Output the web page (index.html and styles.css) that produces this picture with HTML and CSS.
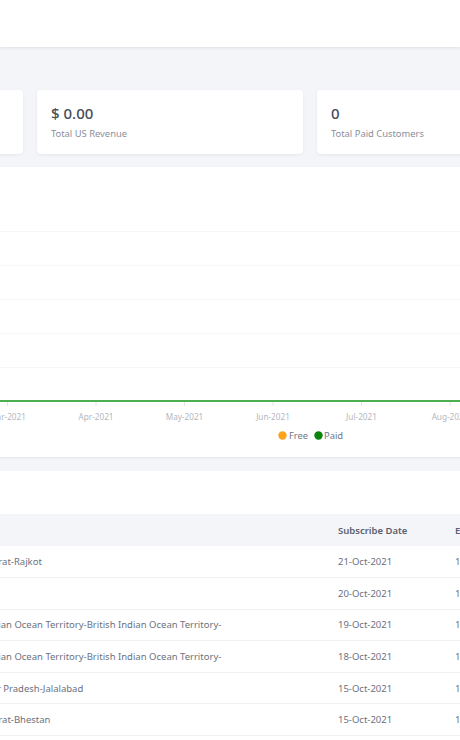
FILE: index.html
```html
<!DOCTYPE html>
<html>
<head>
<meta charset="utf-8">
<link rel="stylesheet" href="styles.css">
</head>
<body>
<header class="topbar"></header>
<main class="main">
  <section class="stats">
    <div class="stat-card">
      <div class="stat-value">12</div>
      <div class="stat-label">Total Customers</div>
    </div>
    <div class="stat-card">
      <div class="stat-value">$ 0.00</div>
      <div class="stat-label">Total US Revenue</div>
    </div>
    <div class="stat-card">
      <div class="stat-value">0</div>
      <div class="stat-label">Total Paid Customers</div>
    </div>
  </section>

  <section class="chart-card">
    <svg class="chart" width="1000" height="290" viewBox="0 0 1000 290">
      <g transform="translate(257,-167)">
        <g class="grid">
          <line x1="-257" y1="231.5" x2="743" y2="231.5"/>
          <line x1="-257" y1="265.5" x2="743" y2="265.5"/>
          <line x1="-257" y1="299.5" x2="743" y2="299.5"/>
          <line x1="-257" y1="333.5" x2="743" y2="333.5"/>
          <line x1="-257" y1="367.5" x2="743" y2="367.5"/>
        </g>
        <g class="ticks">
          <line x1="7.5" y1="402" x2="7.5" y2="406"/>
          <line x1="96" y1="402" x2="96" y2="406"/>
          <line x1="184.5" y1="402" x2="184.5" y2="406"/>
          <line x1="273" y1="402" x2="273" y2="406"/>
          <line x1="361.5" y1="402" x2="361.5" y2="406"/>
          <line x1="450" y1="402" x2="450" y2="406"/>
        </g>
        <line class="paid-line" x1="-257" y1="401" x2="743" y2="401"/>
        <g class="axis-labels">
          <text x="7.5" y="420">Mar-2021</text>
          <text x="96" y="420">Apr-2021</text>
          <text x="184.5" y="420">May-2021</text>
          <text x="273" y="420">Jun-2021</text>
          <text x="361.5" y="420">Jul-2021</text>
          <text x="450" y="420">Aug-2021</text>
        </g>
        <circle cx="282.5" cy="435.5" r="4.2" fill="#fba31a"/>
        <text class="legend" x="289" y="439">Free</text>
        <circle cx="318.5" cy="435.5" r="4.2" fill="#0b840b"/>
        <text class="legend" x="324" y="439">Paid</text>
      </g>
    </svg>
  </section>

  <section class="table-card">
    <div class="table-title">Recent Subscribers</div>
    <table class="subs">
      <colgroup>
        <col class="c-name"><col class="c-addr"><col class="c-date"><col class="c-exp">
      </colgroup>
      <thead>
        <tr><th>Name</th><th>Address</th><th>Subscribe Date</th><th>Expiry Date</th></tr>
      </thead>
      <tbody>
        <tr><td>Rahul Patel</td><td>India-Gujarat-Rajkot</td><td>21-Oct-2021</td><td>19-Nov-2021</td></tr>
        <tr><td>John Smith</td><td></td><td>20-Oct-2021</td><td>18-Nov-2021</td></tr>
        <tr><td>Test User</td><td>British Indian Ocean Territory-British Indian Ocean Territory-</td><td>19-Oct-2021</td><td>17-Nov-2021</td></tr>
        <tr><td>Demo User</td><td>British Indian Ocean Territory-British Indian Ocean Territory-</td><td>18-Oct-2021</td><td>16-Nov-2021</td></tr>
        <tr><td>Amit Kumar</td><td>India-Uttar Pradesh-Jalalabad</td><td>15-Oct-2021</td><td>13-Nov-2021</td></tr>
        <tr><td>Ravi Shah</td><td>India-Gujarat-Bhestan</td><td>15-Oct-2021</td><td>13-Nov-2021</td></tr>
        <tr><td>Mehul Joshi</td><td>India-Gujarat-Surat</td><td>14-Oct-2021</td><td>12-Nov-2021</td></tr>
      </tbody>
    </table>
  </section>
</main>
</body>
</html>
```
FILE: styles.css
```css
* { box-sizing: border-box; }
html, body { margin: 0; padding: 0; }
body {
  background: #f4f5f8;
  font-family: "Noto Sans", "DejaVu Sans", sans-serif;
  color: #6c7180;
  width: 460px;
  height: 740px;
  overflow: hidden;
}
.topbar {
  height: 47px;
  background: #ffffff;
  box-shadow: 0 1px 3px rgba(30, 40, 70, 0.10);
  position: relative;
  z-index: 1;
}
.main {
  margin-left: -257px;
  width: 1000px;
  padding-top: 43px;
}
.stats {
  display: grid;
  grid-template-columns: repeat(3, 266px);
  gap: 14px;
  padding: 0 14px;
}
.stat-card {
  background: #ffffff;
  height: 64px;
  border-radius: 4px;
  padding: 13px 14px 0;
  box-shadow: 0 1px 3px rgba(30, 40, 70, 0.07);
}
.stat-value {
  font-size: 15px;
  line-height: 20px;
  color: #474d5a;
  font-weight: 500;
}
.stat-label {
  font-size: 9.4px;
  line-height: 14px;
  margin-top: 4px;
  color: #8a8f9c;
}
.chart-card {
  margin-top: 13px;
  height: 290px;
  background: #ffffff;
  box-shadow: 0 1px 3px rgba(30, 40, 70, 0.07);
}
.chart { display: block; }
.grid line { stroke: #f7f7f9; stroke-width: 1; }
.ticks line { stroke: #e3e4e8; stroke-width: 1; }
.paid-line { stroke: #4cae4f; stroke-width: 2; }
.axis-labels text {
  font-family: "Noto Sans", sans-serif;
  font-size: 8.2px;
  fill: #b3b7c0;
  text-anchor: middle;
}
.legend {
  font-family: "Noto Sans", sans-serif;
  font-size: 9.4px;
  fill: #737886;
}
.table-card {
  margin-top: 14px;
  background: #ffffff;
  height: 400px;
}
.table-title {
  height: 43px;
  padding: 14px 0 0 14px;
  font-size: 12px;
  color: #474d5a;
}
.subs {
  border-collapse: collapse;
  table-layout: fixed;
  width: 815px;
  font-size: 9.5px;
}
.c-name { width: 195px; }
.c-addr { width: 386px; }
.c-date { width: 117px; }
.c-exp { width: 117px; }
.subs th {
  background: #f4f5f8;
  height: 32px;
  padding: 0 14px;
  text-align: left;
  font-weight: 600;
  color: #5b606d;
  white-space: nowrap;
}
.subs td {
  height: 31.6px;
  padding: 0 14px;
  border-bottom: 1px solid #f1f2f5;
  color: #6c7180;
  white-space: nowrap;
  overflow: hidden;
}
```
